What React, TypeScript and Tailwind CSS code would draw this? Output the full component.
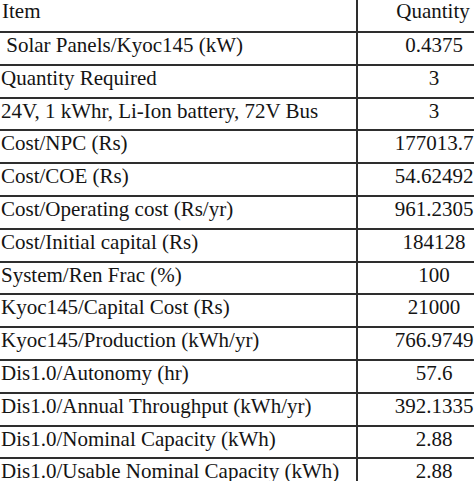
import React from "react";

const rows: [string, string][] = [
  [" Solar Panels/Kyoc145 (kW)", "0.4375"],
  ["Quantity Required", "3"],
  ["24V, 1 kWhr, Li-Ion battery, 72V Bus", "3"],
  ["Cost/NPC (Rs)", "177013.7"],
  ["Cost/COE (Rs)", "54.62492"],
  ["Cost/Operating cost (Rs/yr)", "961.2305"],
  ["Cost/Initial capital (Rs)", "184128"],
  ["System/Ren Frac (%)", "100"],
  ["Kyoc145/Capital Cost (Rs)", "21000"],
  ["Kyoc145/Production (kWh/yr)", "766.9749"],
  ["Dis1.0/Autonomy (hr)", "57.6"],
  ["Dis1.0/Annual Throughput (kWh/yr)", "392.1335"],
  ["Dis1.0/Nominal Capacity (kWh)", "2.88"],
  ["Dis1.0/Usable Nominal Capacity (kWh)", "2.88"],
];

export default function App() {
  return (
    <div
      className="w-[474px] h-[481px] overflow-hidden bg-white text-[#141414] text-[21px] leading-[24px]"
      style={{ fontFamily: '"Liberation Serif", "Times New Roman", serif' }}
    >
      <div className="w-[510px] flex flex-col">
        <div className="flex h-[31px]">
          <div className="w-[356px] pl-[2px] -mt-[1px] whitespace-pre">Item</div>
          <div className="w-[2px] bg-[#2e2e2e]" />
          <div className="w-[152px] text-center -mt-[1px] pr-[2px]">Quantity</div>
        </div>
        {rows.map(([a, b], i) => (
          <div key={i} className="flex h-[32.8px] shrink-0 border-t-2 border-[#2e2e2e]">
            <div className="w-[356px] pl-[1px] whitespace-pre overflow-hidden">{a}</div>
            <div className="w-[2px] bg-[#2e2e2e]" />
            <div className="w-[152px] text-center whitespace-pre">{b}</div>
          </div>
        ))}
      </div>
    </div>
  );
}
